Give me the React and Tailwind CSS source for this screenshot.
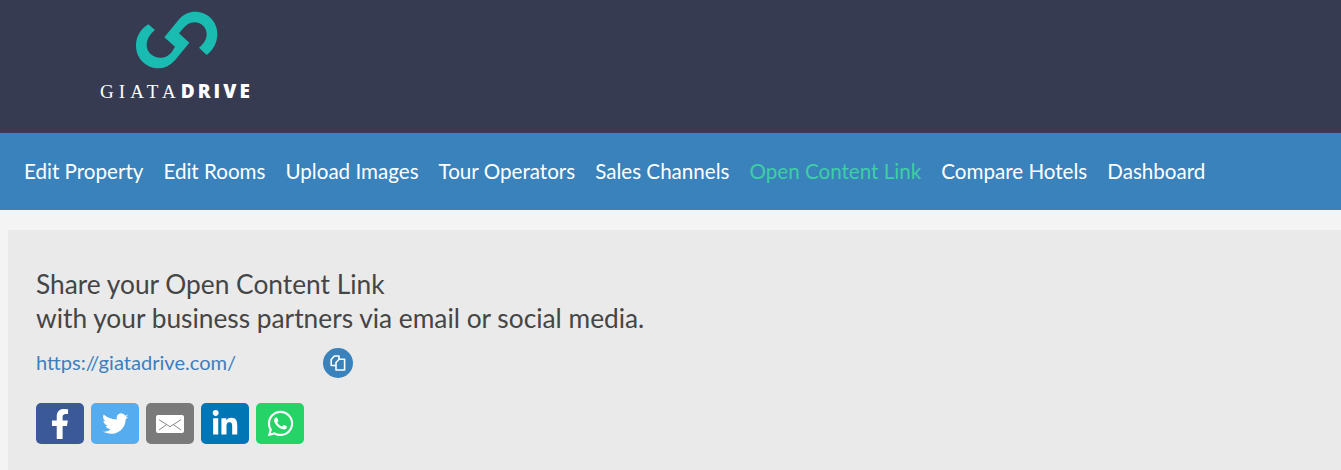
import { FaFacebookF, FaLinkedinIn, FaWhatsapp } from "react-icons/fa";

const navItems = [
  { label: "Edit Property" },
  { label: "Edit Rooms" },
  { label: "Upload Images" },
  { label: "Tour Operators" },
  { label: "Sales Channels" },
  { label: "Open Content Link", active: true },
  { label: "Compare Hotels" },
  { label: "Dashboard" },
];

function Logo() {
  return (
    <div className="flex w-[153px] flex-col items-center">
      <svg width="95" height="70" viewBox="0 0 285 210" className="ml-[1px]">
        <path
          fill="#1abcb2"
          d="M55 58 L75 75 C58 89 50 104 50 120 C50 142 68 158 92 158 C108 158 118 150 126 140 L135 125 L103 97 L148 42 C162 27 178 20 195 20 C233 20 262 50 262 86 C262 112 250 134 230 150 L207 128 C222 116 230 102 230 87 C230 68 214 52 194 52 C180 52 170 58 160 70 L147 85 L178 113 L135 166 C120 182 105 190 88 190 C48 190 18 160 18 122 C18 96 30 74 55 58 Z"
        />
      </svg>
      <div className="mt-[6px] flex items-baseline whitespace-nowrap leading-[20px] text-white">
        <span className="font-['Liberation_Serif',serif] text-[19px] tracking-[0.265em]">GIATA</span>
        <span className="font-['Open_Sans',sans-serif] text-[19px] font-extrabold tracking-[0.16em]">DRIVE</span>
      </div>
    </div>
  );
}

function TwitterBird() {
  return (
    <svg width="27" height="23" viewBox="50 36 80 68" fill="#fff">
      <path d="M127 43 L119 47 C116 42 110 39 104 40 C96 41 92 50 94 58 C78 57 65 52 55 43 C51 50 54 58 60 63 L54 62 C55 70 60 75 67 77 L61 78 C64 83 69 86 76 87 C70 92 62 95 53 94 C62 99 72 101 82 100 C105 98 120 78 120 58 L128 50 L120 52 Z" />
    </svg>
  );
}

function MailIcon() {
  return (
    <svg width="28" height="18" viewBox="0 0 28 18">
      <rect width="28" height="18" rx="2" fill="#fff" />
      <path d="M3 4.7 L14 11.7 L25 4.7 M3 15 L10.5 9.7 M25 15 L17.5 9.7" stroke="#7a7a7a" strokeWidth="0.9" fill="none" />
    </svg>
  );
}

function CopyIcon() {
  return (
    <svg width="18" height="18" viewBox="0 0 18 18" fill="none" stroke="#fff" strokeWidth="1.6" strokeLinejoin="round">
      <path d="M7 11.5 H2.2 V5.5 L5.4 2 H10 V5" />
      <path d="M7 8.5 L10.2 5.2 H15.6 V16 H7 Z" />
    </svg>
  );
}

function ShareButton({ color, children }) {
  return (
    <a className={`flex h-[41px] w-[48px] items-center justify-center rounded-[5px] text-white ${color}`}>
      {children}
    </a>
  );
}

export default function App() {
  return (
    <div className="h-[470px] overflow-hidden bg-[#f4f4f4] font-['Lato',sans-serif]">
      <header className="flex h-[133px] bg-[#363b52] pl-[100px] pt-[5px]">
        <Logo />
      </header>

      <nav className="flex h-[77px] items-start gap-[20px] bg-[#3982bc] pl-[24px] pt-[24px] text-[20.6px] leading-[28px] text-white">
        {navItems.map((item) => (
          <a key={item.label} className={item.active ? "text-[#3ecfa3]" : ""}>
            {item.label}
          </a>
        ))}
      </nav>

      <main className="ml-[8px] mt-[20px] h-[240px] bg-[#eaeaea] pl-[28px] pt-[37px]">
        <h2 className="text-[26.3px] leading-[34px] text-[#454545]">
          Share your Open Content Link
          <br />
          with your business partners via email or social media.
        </h2>

        <div className="mt-[13px] flex h-[30px] items-center">
          <a className="mb-[2px] w-[287px] text-[20.1px] text-[#3d7fbc]">https://giatadrive.com/</a>
          <button className="flex h-[30px] w-[30px] items-center justify-center rounded-full bg-[#3982bc]">
            <CopyIcon />
          </button>
        </div>

        <div className="mt-[25px] flex gap-[7px]">
          <ShareButton color="bg-[#3b5998]">
            <FaFacebookF size={30} />
          </ShareButton>
          <ShareButton color="bg-[#55acee]">
            <TwitterBird />
          </ShareButton>
          <ShareButton color="bg-[#7a7a7a]">
            <MailIcon />
          </ShareButton>
          <ShareButton color="bg-[#0077b5]">
            <FaLinkedinIn size={28} />
          </ShareButton>
          <ShareButton color="bg-[#25d366]">
            <FaWhatsapp size={29} />
          </ShareButton>
        </div>
      </main>
    </div>
  );
}
